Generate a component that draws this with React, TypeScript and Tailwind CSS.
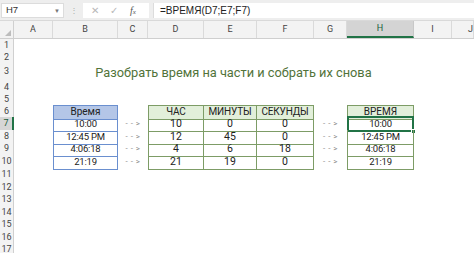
import React from "react";

const COLS = "grid grid-cols-[14px_39px_65px_30px_56px_53px_57px_33px_67px_38px_22px]";
const LETTERS = ["A", "B", "C", "D", "E", "F", "G", "H", "I", "J"];
const HEIGHTS = [12, 12, 18, 12, 12, 12, 13, 12, 13, 13, 13, 12, 13, 12, 13, 12, 13];

const times = ["10:00", "12:45 PM", "4:06:18", "21:19"];
const hours = ["10", "12", "4", "21"];
const mins = ["0", "45", "6", "19"];
const secs = ["0", "0", "18", "0"];

const blueB = "border-[#6a8fcf]";
const greenB = "border-[#7d9c66]";

function Cell({
  children,
  cls = "",
}: {
  children?: React.ReactNode;
  cls?: string;
}) {
  return (
    <div className={`relative flex items-center justify-center overflow-visible whitespace-nowrap leading-none ${cls}`}>
      {children}
    </div>
  );
}

function Arrow() {
  return <span className="text-[8px] text-[#8a8a8a] tracking-[0.5px]">- - &gt;</span>;
}

function SheetRow({ r, h }: { r: number; h: number }) {
  const selectedRow = r === 7;
  const rowHdr = (
    <div
      className={`flex items-center justify-center text-[9px] border-b border-[#e1e1e1] ${
        selectedRow
          ? "bg-[#d6d6d6] text-[#215f3a] border-r-2 border-r-[#217346]"
          : "bg-[#f3f3f3] text-[#444] border-r border-r-[#d0d0d0]"
      }`}
    >
      {r}
    </div>
  );

  if (r === 3) {
    return (
      <div className={COLS} style={{ height: h }}>
        {rowHdr}
        <div />
        <div className="col-span-7 flex items-center justify-center text-[12.8px] text-[#52733a] whitespace-nowrap">
          Разобрать время на части и собрать их снова
        </div>
        <div />
        <div />
      </div>
    );
  }

  const cells: React.ReactNode[] = [];
  for (let c = 1; c <= 10; c++) {
    let content: React.ReactNode = null;
    let cls = "";
    if (r === 6) {
      if (c === 2) {
        content = "Время";
        cls = `bg-[#b4c6e7] border ${blueB} text-[10px]`;
      } else if (c >= 4 && c <= 6) {
        content = ["ЧАС", "МИНУТЫ", "СЕКУНДЫ"][c - 4];
        cls = `bg-[#e2efda] border-t border-b border-r ${greenB} ${c === 4 ? "border-l" : ""} text-[10px] tracking-[-0.2px]`;
      } else if (c === 8) {
        content = "ВРЕМЯ";
        cls = `bg-[#e2efda] border ${greenB} text-[10px]`;
      }
    } else if (r >= 7 && r <= 10) {
      const i = r - 7;
      if (c === 2) {
        content = times[i];
        cls = `border-l border-r border-b ${blueB} text-[9.5px] tracking-[-0.2px]`;
      } else if (c === 3 || c === 7) {
        content = <Arrow />;
      } else if (c >= 4 && c <= 6) {
        content = [hours, mins, secs][c - 4][i];
        cls = `border-r border-b ${greenB} ${c === 4 ? "border-l" : ""} text-[10.5px]`;
      } else if (c === 8) {
        content = (
          <>
            {times[i]}
            {r === 7 && (
              <>
                <span className="pointer-events-none absolute -left-px -top-px -right-px -bottom-px border-2 border-[#217346]" />
                <span className="absolute -right-[3px] -bottom-[3px] h-[5px] w-[5px] bg-[#217346] border border-white" />
              </>
            )}
          </>
        );
        cls = `border-l border-r border-b ${greenB} text-[9.5px] tracking-[-0.2px]`;
      }
    }
    cells.push(
      <Cell key={c} cls={cls}>
        {content}
      </Cell>
    );
  }

  return (
    <div className={`${COLS} text-[#222]`} style={{ height: h }}>
      {rowHdr}
      {cells}
    </div>
  );
}

export default function App() {
  return (
    <div
      className="w-[474px] h-[253px] overflow-hidden bg-white"
      style={{ fontFamily: "Roboto, 'Noto Sans', sans-serif" }}
    >
      {/* Formula bar */}
      <div className="h-[21px] bg-[#eeeeee] flex items-start pt-[3px] gap-0 border-b border-[#d9d9d9]">
        <div className="ml-[1px] w-[63px] h-[15px] bg-white border border-[#dcdcdc] flex items-center justify-between pl-[4px] pr-[3px]">
          <span className="text-[9.5px] text-[#333]" style={{ fontFamily: "'Liberation Sans', sans-serif" }}>
            H7
          </span>
          <span className="text-[6px] text-[#777]">▼</span>
        </div>
        <div className="w-[19px] h-[15px] flex items-center justify-center text-[8px] text-[#aaa]">⋮</div>
        <div className="w-[66px] h-[15px] bg-white flex items-center">
          <span className="ml-[8px] text-[10px] text-[#b8b8b8]">✕</span>
          <span className="ml-[11px] text-[10px] text-[#b8b8b8]">✓</span>
          <span
            className="ml-[12px] text-[10px] italic text-[#555]"
            style={{ fontFamily: "'Liberation Serif', serif" }}
          >
            f<span className="text-[7px]">x</span>
          </span>
        </div>
        <div className="ml-[4px] flex-1 h-[15px] bg-white border-l border-[#dcdcdc] flex items-center pl-[6px]">
          <span className="text-[10px] text-[#222]" style={{ fontFamily: "'Liberation Sans', sans-serif" }}>
            =ВРЕМЯ(D7;E7;F7)
          </span>
        </div>
      </div>

      {/* Column headers */}
      <div className={`${COLS} h-[18px] bg-[#f3f3f3] border-b border-[#cfcfcf]`}>
        <div className="relative border-r border-[#d0d0d0]">
          <span className="absolute right-[2px] bottom-[2px] w-0 h-0 border-l-[6px] border-l-transparent border-b-[6px] border-b-[#bdbdbd]" />
        </div>
        {LETTERS.map((l) => (
          <div
            key={l}
            className={`flex items-center justify-center text-[9px] ${
              l === "H"
                ? "bg-[#d4d4d4] text-[#215f3a] border-b-2 border-[#217346] border-r border-r-[#c8c8c8]"
                : "text-[#444] border-r border-[#dadada]"
            } ${l === "J" ? "justify-end pr-0" : ""}`}
          >
            {l}
          </div>
        ))}
      </div>

      {HEIGHTS.map((h, i) => (
        <SheetRow key={i} r={i + 1} h={h} />
      ))}
    </div>
  );
}
